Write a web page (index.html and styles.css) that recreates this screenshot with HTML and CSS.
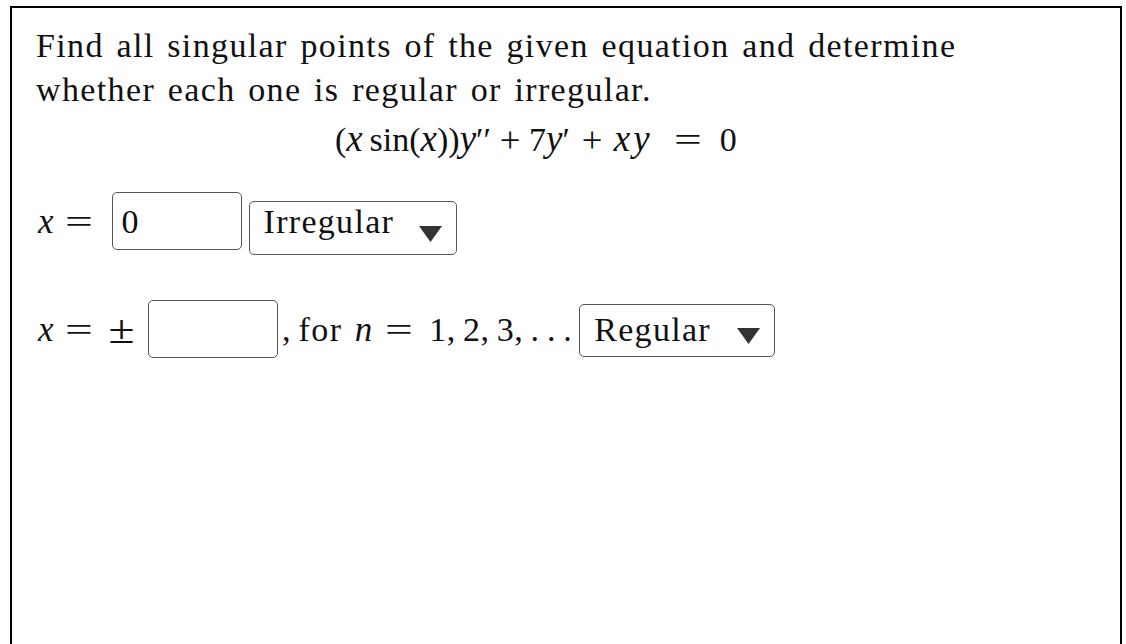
FILE: index.html
```html
<!DOCTYPE html>
<html>
<head>
<meta charset="utf-8">
<link rel="stylesheet" href="styles.css">
</head>
<body>
<div class="card">
  <p class="prompt">Find all singular points of the given equation and determine<br>whether each one is regular or irregular.</p>
  <div class="equation"><span class="grp g1">(<i>x</i>&#8201;sin(<i>x</i>))<i>y</i>&#8242;&#8242;</span><span class="op plus p1">+</span><span class="grp">7<i>y</i>&#8242;</span><span class="op plus p2">+</span><span class="grp xy"><i>x</i><i>y</i></span><span class="op rel p3">=</span><span class="grp">0</span></div>
  <div class="row row1">
    <span class="lhs"><i class="var">x</i><span class="op rel r1">=</span></span>
    <span class="field w1">0</span>
    <span class="select sel1"><span class="label">Irregular</span><svg class="caret" viewBox="0 0 23 16" width="23" height="16"><polygon points="0,0 23,0 11.5,16" fill="#333"/></svg></span>
  </div>
  <div class="row row2">
    <span class="lhs"><i class="var">x</i><span class="op rel r1">=</span><span class="op pm">&#177;</span></span>
    <span class="field w2">&#8203;</span>
    <span class="tail"><span class="comma">,</span><span class="for">for</span><i class="var n">n</i><span class="op rel r2">=</span><span class="seq">1,&#8201;2,&#8201;3,&#8201;.&#8201;.&#8201;.</span></span>
    <span class="select sel2"><span class="label">Regular</span><svg class="caret" viewBox="0 0 23 16" width="23" height="16"><polygon points="0,0 23,0 11.5,16" fill="#333"/></svg></span>
  </div>
</div>
</body>
</html>
```
FILE: styles.css
```css
html, body {
  margin: 0;
  padding: 0;
  background: #fff;
}
body {
  font-family: "Liberation Serif", "Times New Roman", serif;
  font-size: 34px;
  color: #111;
  overflow: hidden;
}
.card {
  margin: 6px 4px 0 10px;
  border: 2px solid #000;
  border-bottom: none;
  height: 700px;
  padding: 15.5px 24px 0 24px;
  box-sizing: border-box;
}
.prompt {
  margin: 0;
  line-height: 44px;
  word-spacing: 2.8px;
  letter-spacing: 1.37px;
}
.equation {
  margin-top: 5px;
  line-height: 44px;
  padding-left: 299px;
  display: flex;
  align-items: baseline;
}
.equation i {
  font-size: 37px;
}
.grp {
  display: inline-block;
}
.xy i {
  letter-spacing: 3px;
}
.op {
  display: inline-block;
  text-align: center;
  font-style: normal;
}
.plus {
  transform: scale(1.08, 1.08);
}
.rel {
  transform: scaleX(1.45);
}
.p1 { width: 38px; }
.p2 { width: 44px; }
.p3 { width: 64px; margin-left: 3px; }
.row {
  display: flex;
  align-items: baseline;
}
.row1 {
  margin-top: 30px;
}
.row2 {
  margin-top: 45px;
}
.lhs {
  display: inline-flex;
  align-items: baseline;
  padding-left: 2px;
}
.var {
  font-size: 35px;
}
.r1 {
  width: 50px;
}
.pm {
  width: 27px;
  transform: scale(1.4, 1.15);
  margin-left: 4.5px;
}
.field {
  display: inline-block;
  line-height: 34px;
  height: 34px;
  border: 1.5px solid #555;
  border-radius: 5px;
  padding: 12px 8px 10px 9px;
  margin-left: 8px;
}
.w1 {
  width: 111px;
}
.w2 {
  width: 111px;
  margin-left: 13px;
}
.tail {
  display: inline-flex;
  align-items: baseline;
  margin-left: 4px;
}
.for {
  margin-left: 8px;
  letter-spacing: 1.5px;
}
.n {
  margin-left: 12px;
}
.r2 {
  width: 48px;
  margin-left: 3px;
}
.seq {
  margin-left: 6px;
  letter-spacing: 0.5px;
}
.select {
  display: inline-flex;
  align-items: baseline;
  justify-content: space-between;
  line-height: 34px;
  border: 1.5px solid #555;
  border-radius: 5px;
  padding: 3px 14px 15px 14px;
  box-sizing: border-box;
}
.label {
  letter-spacing: 1.3px;
}
.sel1 {
  width: 208px;
  margin-left: 7px;
}
.sel2 {
  width: 196px;
  margin-left: 7px;
  padding-top: 8px;
  padding-bottom: 9px;
}
.caret {
  align-self: flex-end;
  margin-bottom: -3px;
}
.sel2 .caret {
  margin-bottom: 3px;
}
```
